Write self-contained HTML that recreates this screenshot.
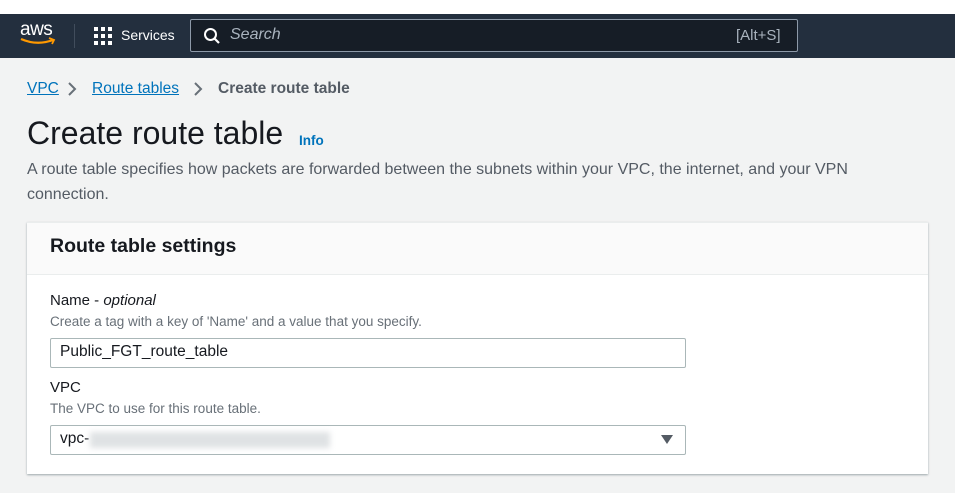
<!DOCTYPE html>
<html><head><style>
*{margin:0;padding:0;box-sizing:border-box}
body{width:955px;height:493px;overflow:hidden;background:#f2f3f3;font-family:"Liberation Sans",sans-serif;position:relative}
.abs{position:absolute;white-space:nowrap}
</style></head><body>
<div class="abs" style="left:0;top:0;width:955px;height:14px;background:#fff"></div>
<div class="abs" style="left:0;top:14px;width:955px;height:44px;background:#232f3e"></div>
<div class="abs" style="left:20px;top:19px;color:#fff;font-size:19px;letter-spacing:-0.5px">aws</div>
<svg class="abs" style="left:19px;top:37px" width="38" height="10"><path d="M2 2 Q18 9 34 3" stroke="#ff9900" stroke-width="2.2" fill="none"/><path d="M30 1 L35 3 L33 7" stroke="#ff9900" stroke-width="1.8" fill="none"/></svg>
<div class="abs" style="left:74px;top:24px;width:1px;height:24px;background:#414d5c"></div>
<svg class="abs" style="left:94px;top:27px" width="18" height="18" fill="#fff"><rect x="0" y="0" width="4" height="4"/><rect x="7" y="0" width="4" height="4"/><rect x="14" y="0" width="4" height="4"/><rect x="0" y="7" width="4" height="4"/><rect x="7" y="7" width="4" height="4"/><rect x="14" y="7" width="4" height="4"/><rect x="0" y="14" width="4" height="4"/><rect x="7" y="14" width="4" height="4"/><rect x="14" y="14" width="4" height="4"/></svg>
<div class="abs" style="left:121px;top:27px;color:#fff;font-size:14px">Services</div>
<div class="abs" style="left:190px;top:19px;width:608px;height:33px;background:#161d26;border:1px solid #8d99a8;border-radius:2px"></div>
<svg class="abs" style="left:203px;top:27px" width="18" height="18"><circle cx="7.5" cy="7.5" r="5.5" stroke="#fff" stroke-width="2" fill="none"/><path d="M11.5 11.5 L16 16" stroke="#fff" stroke-width="2.2"/></svg>
<div class="abs" style="left:230px;top:26px;color:#a9b3be;font-size:16px;font-style:italic">Search</div>
<div class="abs" style="left:736px;top:27px;color:#a9b3be;font-size:15px">[Alt+S]</div>

<div class="abs" style="left:27px;top:80px;font-size:15.5px;color:#0073bb;text-decoration:underline">VPC</div>
<svg class="abs" style="left:66px;top:81px" width="12" height="16"><path d="M3 2 L9 8 L3 14" stroke="#687078" stroke-width="2" fill="none"/></svg>
<div class="abs" style="left:92px;top:80px;font-size:15.5px;color:#0073bb;text-decoration:underline">Route tables</div>
<svg class="abs" style="left:192px;top:81px" width="12" height="16"><path d="M3 2 L9 8 L3 14" stroke="#687078" stroke-width="2" fill="none"/></svg>
<div class="abs" style="left:218px;top:80px;font-size:15.5px;color:#545b64;font-weight:bold">Create route table</div>

<div class="abs" style="left:27px;top:115px;font-size:32px;color:#16191f">Create route table</div>
<div class="abs" style="left:299px;top:133px;font-size:13.5px;color:#0073bb;font-weight:bold">Info</div>
<div class="abs" style="left:27px;top:157px;font-size:16px;color:#545b64;line-height:25px;white-space:normal;width:880px">A route table specifies how packets are forwarded between the subnets within your VPC, the internet, and your VPN connection.</div>

<div class="abs" style="left:27px;top:222px;width:901px;height:252px;background:#fff;box-shadow:0 1px 2px rgba(0,28,36,.35);border-top:1px solid #eaeded"></div>
<div class="abs" style="left:27px;top:223px;width:901px;height:52px;background:#fafafa;border-bottom:1px solid #eaeded"></div>
<div class="abs" style="left:50px;top:235px;font-size:19.5px;color:#16191f;font-weight:bold">Route table settings</div>

<div class="abs" style="left:50px;top:292px;font-size:15px;color:#16191f">Name - <i>optional</i></div>
<div class="abs" style="left:50px;top:314px;font-size:13.5px;color:#687078">Create a tag with a key of 'Name' and a value that you specify.</div>
<div class="abs" style="left:50px;top:338px;width:636px;height:30px;border:1px solid #aab7b8;border-radius:2px;background:#fff"></div>
<div class="abs" style="left:60px;top:343px;font-size:15.5px;color:#16191f">Public_FGT_route_table</div>

<div class="abs" style="left:50px;top:379px;font-size:15px;color:#16191f">VPC</div>
<div class="abs" style="left:50px;top:401px;font-size:13.5px;color:#687078">The VPC to use for this route table.</div>
<div class="abs" style="left:50px;top:425px;width:636px;height:30px;border:1px solid #aab7b8;border-radius:2px;background:#fff"></div>
<div class="abs" style="left:60px;top:430px;font-size:15.5px;color:#16191f">vpc-</div>
<div class="abs" style="left:90px;top:432px;width:240px;height:16px;background:#dfe2e4;filter:blur(3px)"></div>
<svg class="abs" style="left:661px;top:435px" width="12" height="10"><path d="M0 0 L12 0 L6 9 Z" fill="#545b64"/></svg>
</body></html>
